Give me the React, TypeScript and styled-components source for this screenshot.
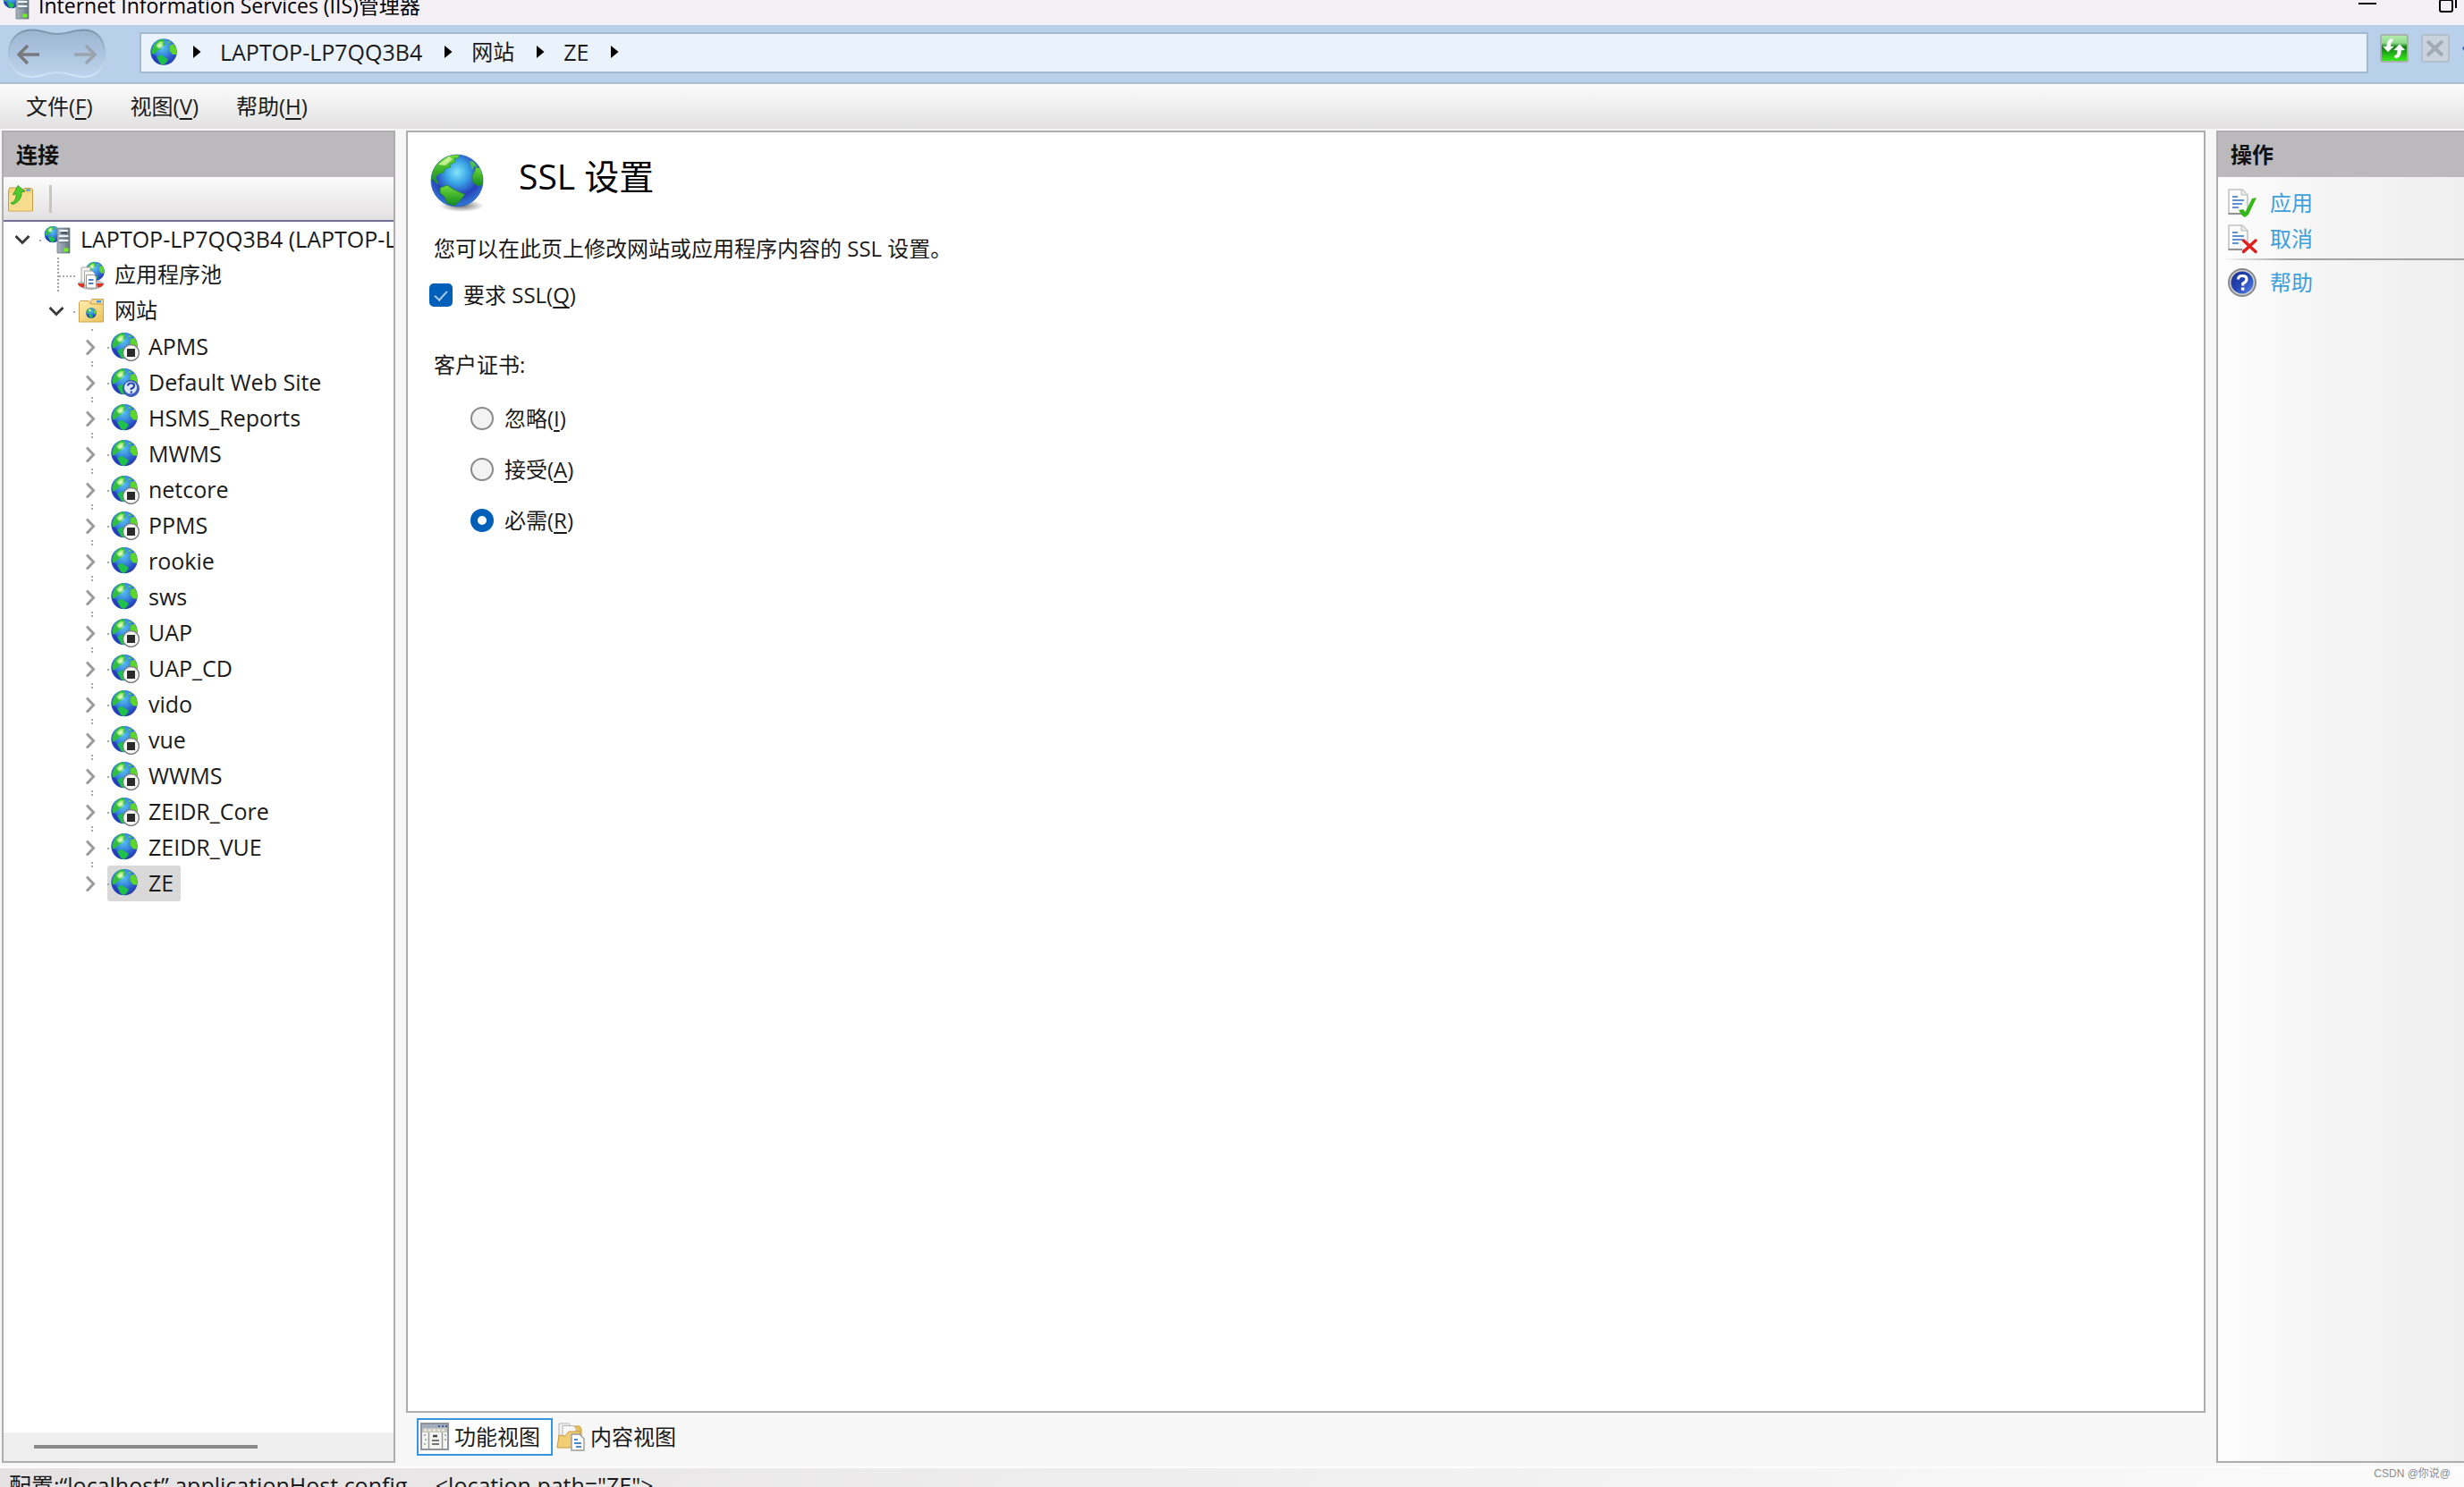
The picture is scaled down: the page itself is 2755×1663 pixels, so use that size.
import React, { useId, useState } from "react";
import styled, { createGlobalStyle, css } from "styled-components";

const GlobalStyle = createGlobalStyle`
  * { box-sizing: border-box; }
  html, body { margin: 0; padding: 0; overflow: hidden; }
  body, button, input {
    font-family: "Open Sans", "Noto Sans CJK SC", sans-serif;
    font-size: 24px;
    line-height: 32px;
    color: #1a1a1a;
  }
  button { border: 0; padding: 0; background: none; }
  svg { display: block; flex: none; }
`;

const line = "#adadad";

/* ---------- drawings ---------- */

function GlobeArt({ r = 15, cx = 15, cy = 15 }: { r?: number; cx?: number; cy?: number }) {
  const id = useId();
  const s = r / 15;
  return (
    <g transform={`translate(${cx - r} ${cy - r}) scale(${s})`}>
      <defs>
        <radialGradient id={id + "o"} cx="0.45" cy="0.32" r="0.72">
          <stop offset="0" stopColor="#5cc4f2" />
          <stop offset="0.4" stopColor="#3b8fe0" />
          <stop offset="0.75" stopColor="#2b4fc8" />
          <stop offset="1" stopColor="#2a3c9c" />
        </radialGradient>
        <radialGradient id={id + "h"} cx="0.5" cy="0.5" r="0.5">
          <stop offset="0" stopColor="#ffffff" stopOpacity="0.95" />
          <stop offset="1" stopColor="#d8ffb0" stopOpacity="0" />
        </radialGradient>
        <clipPath id={id + "c"}><circle cx="15" cy="15" r="14.5" /></clipPath>
      </defs>
      <circle cx="15" cy="15" r="14.7" fill={`url(#${id}o)`} />
      <g clipPath={`url(#${id}c)`}>
        <path d="M2 18 C1 12 4 5 11 1 L16 1 L15 4 L17 7 L13 9 L12 12 L9 13 L6 16 Z" fill="#30bf3c" />
        <path d="M6 8 L11 3 L15 4 L13 8 L9 11 Z" fill="#8fe25a" />
        <path d="M7 21 L12 18 L16 21 L20 23 L18 27 L14 30 L10 27 Z" fill="#1fc04c" />
        <path d="M22 8 L26 6 L30 12 L29 18 L25 18 L22 14 Z" fill="#5fd62b" />
        <path d="M20 3 L23 4 L22 6 L19 5 Z" fill="#4cc85a" />
        <path d="M1 17 C3 24 7 28 12 30 L9 24 L6 19 Z" fill="#2338b8" opacity="0.75" />
      </g>
      <circle cx="11" cy="8" r="4.5" fill={`url(#${id}h)`} />
    </g>
  );
}

type Badge = "none" | "stop" | "unknown";

function SiteIcon({ badge }: { badge: Badge }) {
  return (
    <svg width="32" height="32" viewBox="0 0 32 32" aria-hidden="true">
      <GlobeArt cx={15} cy={14.5} />
      {badge === "stop" && (
        <g>
          <circle cx="22.5" cy="22.5" r="9" fill="#f6f6f6" stroke="#808080" strokeWidth="1.4" />
          <rect x="18" y="18" width="9" height="9" fill="#2b2b2b" />
        </g>
      )}
      {badge === "unknown" && (
        <g>
          <circle cx="22.5" cy="22.5" r="9" fill="#3f62c4" stroke="#3453a8" strokeWidth="1" />
          <circle cx="22" cy="21.5" r="7" fill="#dfe8fb" />
          <path d="M19 19.5 Q19 16.5 22.5 16.5 Q26 16.5 26 19.5 Q26 21.500 22.7 22.800 V24" fill="none" stroke="#2747ad" strokeWidth="2.2" />
          <rect x="21.6" y="25.4" width="2.4" height="2.2" fill="#2747ad" />
        </g>
      )}
    </svg>
  );
}

function ServerIcon() {
  const id = useId();
  return (
    <svg width="32" height="32" viewBox="0 0 32 32" aria-hidden="true">
      <defs>
        <linearGradient id={id} x1="0" x2="1">
          <stop offset="0" stopColor="#a9b6bf" /><stop offset="0.5" stopColor="#8c9aa4" /><stop offset="1" stopColor="#63717c" />
        </linearGradient>
      </defs>
      <GlobeArt r={9.5} cx={11} cy={10} />
      <path d="M16 4 L18 3 H30 V31 H16 Z" fill={`url(#${id})`} stroke="#61707a" strokeWidth="0.7" />
      <path d="M18.5 6 H28 M18 12 H28.5 M18 17 H28.5" stroke="#eef3f5" strokeWidth="2" />
      <path d="M20 8.5 H27" stroke="#2c3a44" strokeWidth="1.4" />
      <path d="M18 14.3 H28.5 M18 19.3 H28.5" stroke="#6b7882" strokeWidth="1" />
      <rect x="23.5" y="25.5" width="5" height="4" fill="#6ff51a" />
    </svg>
  );
}

function PoolIcon() {
  return (
    <svg width="32" height="32" viewBox="0 0 32 32" aria-hidden="true">
      <GlobeArt r={11} cx={20} cy={11.5} />
      <path d="M1 25 Q3 31 16 31.5 Q28 31 30 25 L24 22 H6 Z" fill="#c6cacb" stroke="#9b9fa0" strokeWidth="0.8" />
      <path d="M1 25 Q2 29 8 29.5 L9 25 Z" fill="#e2321f" /><path d="M30 25 Q29 29 23 29.5 L22 25 Z" fill="#e2321f" />
      <path d="M5 7 H15 V24 H5 Z" fill="#f4f4f2" stroke="#a8a8a4" />
      <path d="M8.5 11 H17 L20 14 V27 H8.5 Z" fill="#f7f7f5" stroke="#a8a8a4" />
      <path d="M10.5 15.5 H19 L21.5 18 V30 H10.5 Z" fill="#fff" stroke="#9c9c98" />
      <path d="M13 21 H18.5 M13 25 H18.5" stroke="#4d83c9" strokeWidth="2" />
    </svg>
  );
}

function SitesFolderIcon() {
  const id = useId();
  return (
    <svg width="32" height="32" viewBox="0 0 32 32" aria-hidden="true">
      <defs>
        <linearGradient id={id} x2="1" y2="1"><stop offset="0" stopColor="#fdeeb0" /><stop offset="1" stopColor="#edc35b" /></linearGradient>
      </defs>
      <path d="M15 5 L17 2.5 H29.5 V9 H15 Z" fill="#f4d98a" stroke="#c9a049" />
      <rect x="22" y="4" width="5" height="2.4" fill="#3f93e6" />
      <path d="M2.5 6.5 L4 4.5 H13 L15.5 8 H29.5 V28 H2.5 Z" fill={`url(#${id})`} stroke="#cfa24a" />
      <GlobeArt r={6} cx={16} cy={18} />
    </svg>
  );
}

function UpFolderIcon() {
  return (
    <svg width="30" height="32" viewBox="0 0 30 32" aria-hidden="true">
      <path d="M1.5 7 L3 4 H10 L12 7 H18 L19 4.5 H27 L28.5 6 V30 H1.5 Z" fill="#f3d37c" stroke="#c69d45" />
      <path d="M2 10 H28 V29.5 H2 Z" fill="#f7dc8d" />
      <rect x="21" y="5.5" width="5" height="2.2" fill="#4d9be8" />
      <path d="M4 21 C9 20 10.500 15 10 10.500 L6.500 12 L12 1.500 L20 8 L16 8.500 C16.500 15 12.500 21 6 22.500 Z" fill="#4fcb2e" stroke="#2e9a1c" strokeWidth="0.9" />
    </svg>
  );
}

function NavBackdrop() {
  const id = useId();
  return (
    <svg width="112" height="58" viewBox="0 0 112 58" aria-hidden="true">
      <defs>
        <linearGradient id={id} x2="0" y2="1">
          <stop offset="0" stopColor="#9cb4d0" /><stop offset="0.5" stopColor="#acc4df" /><stop offset="1" stopColor="#bfd5ee" />
        </linearGradient>
        <linearGradient id={id + "s"} x2="0" y2="1">
          <stop offset="0" stopColor="#7c93af" /><stop offset="0.4" stopColor="#a3bad5" /><stop offset="1" stopColor="#d3e5f7" />
        </linearGradient>
      </defs>
      <path d="M28 2.5 C40 2.5 44 7 56 7 C68 7 74 2.5 86 2.5 C101 2.5 109 14 109 29 C109 44 101 55 86 55 C74 55 68 50 56 50 C44 50 40 55 28 55 C11 55 2 44 2 29 C2 14 11 2.5 28 2.5 Z"
        fill={`url(#${id})`} stroke={`url(#${id}s)`} strokeWidth="2" />
    </svg>
  );
}

function ArrowIcon({ flip, color }: { flip?: boolean; color: string }) {
  return (
    <svg width="26" height="24" viewBox="0 0 26 24" aria-hidden="true">
      <path d={flip ? "M1 12 H23 M14 2 L24 12 L14 22" : "M25 12 H3 M12 2 L2 12 L12 22"} fill="none" stroke={color} strokeWidth="3.4" />
    </svg>
  );
}

function CrumbArrow() {
  return <svg width="9" height="16" viewBox="0 0 9 16" aria-hidden="true"><path d="M0 1 L8.5 8 L0 15 Z" fill="#000" /></svg>;
}

function RefreshIcon() {
  const id = useId();
  return (
    <svg width="32" height="32" viewBox="0 0 32 32" aria-hidden="true">
      <defs>
        <linearGradient id={id} x2="0" y2="1">
          <stop offset="0" stopColor="#b4ecb0" /><stop offset="0.3" stopColor="#8fdc8c" /><stop offset="0.45" stopColor="#0f7d13" /><stop offset="1" stopColor="#3df21f" />
        </linearGradient>
      </defs>
      <rect x="1" y="1" width="30" height="30" rx="2" fill={`url(#${id})`} stroke="#a7b3ac" strokeWidth="2" />
      <path d="M14 5 C10 5 8 8 7.500 14 H3.500 L9 20 L15.500 14 H12 C12 10 13 8 15 7.500 Z" fill="#fff" stroke="#c3d4c3" strokeWidth="0.5" />
      <path d="M17 27 C22 27 23.500 24 24 18 H28 L22 11.500 L15.500 18 H19.500 C19.500 22 19 24 16 24.500 Z" fill="#fff" stroke="#c3d4c3" strokeWidth="0.5" />
    </svg>
  );
}

function StopIcon() {
  return (
    <svg width="32" height="32" viewBox="0 0 32 32" aria-hidden="true">
      <rect x="1" y="1" width="30" height="30" rx="2" fill="#c9d3de" stroke="#b3bfcc" strokeWidth="2" />
      <path d="M7 8 L24 24 M24 8 L7 24" stroke="#a2abb5" strokeWidth="4" />
    </svg>
  );
}

function HomeEdgeIcon() {
  return <svg width="3" height="14" viewBox="0 0 3 14" aria-hidden="true"><path d="M3 3 L0 7 L3 11 Z" fill="#3b62c8" /></svg>;
}

function BigGlobe() {
  const id = useId();
  return (
    <svg width="64" height="68" viewBox="0 0 64 68" aria-hidden="true">
      <defs>
        <radialGradient id={id} cx="0.5" cy="0.5" r="0.5"><stop offset="0" stopColor="#333" stopOpacity="0.7" /><stop offset="1" stopColor="#333" stopOpacity="0" /></radialGradient>
        <radialGradient id={id + "o"} cx="0.5" cy="0.34" r="0.72">
          <stop offset="0" stopColor="#86e4fb" /><stop offset="0.3" stopColor="#3aa5e6" /><stop offset="0.62" stopColor="#2640b8" /><stop offset="0.85" stopColor="#3070d2" /><stop offset="1" stopColor="#2f7ccc" />
        </radialGradient>
        <linearGradient id={id + "g"} x2="0" y2="1"><stop offset="0" stopColor="#6fdc3a" /><stop offset="1" stopColor="#138a22" /></linearGradient>
        <clipPath id={id + "c"}><circle cx="31" cy="32" r="29" /></clipPath>
      </defs>
      <ellipse cx="36" cy="60" rx="25" ry="7" fill={`url(#${id})`} />
      <circle cx="31" cy="32" r="29" fill={`url(#${id}o)`} stroke="#2a5fae" strokeWidth="0.8" />
      <g clipPath={`url(#${id}c)`}>
        <path d="M1 34 C0 20 10 6 24 3 L34 3 L32 7 L28 7 L29 11 L23 14 L24 17 L17 19 L16 23 L11 24 L7 28 L10 36 L7 34 L4 29 Z" fill={`url(#${id}g)`} stroke="#2a9a34" strokeWidth="0.8" />
        <path d="M10 14 L22 5 L26 8 L18 15 Z" fill="#d7f7a4" opacity="0.85" />
        <path d="M12 40 L20 37 L26 41 L36 46 L40 47 L35 54 L28 60 L20 57 L17 50 L12 46 Z" fill={`url(#${id}g)`} stroke="#1c7a2c" strokeWidth="0.8" />
        <path d="M52 17 L57 18 L60 26 L60 36 L55 38 L49 34 L48 27 L51 21 Z" fill={`url(#${id}g)`} stroke="#2a8a34" strokeWidth="0.8" />
        <path d="M45 10 L50 11 L54 17 L50 16 L48 20 Z" fill="#4cbf53" />
      </g>
    </svg>
  );
}

function DocIcon({ kind }: { kind: "apply" | "cancel" }) {
  return (
    <svg width="34" height="34" viewBox="0 0 34 34" aria-hidden="true">
      <path d="M2 2 H17 L23 8 V29 H2 Z" fill="#fbfbfb" stroke="#c2c2c2" strokeWidth="1.6" />
      <path d="M16 2 V8 H23" fill="#e8e8e8" stroke="#b9b9b9" />
      <path d="M1.500 29 H17" stroke="#949494" strokeWidth="2.200" />
      <path d="M6 10 H12 M6 14 H19 M6 18 H17 M6 22 H13" stroke="#6192cb" strokeWidth="1.800" />
      {kind === "apply"
        ? <path d="M13 25 L18 24 L20.500 27 L28 12 L33 11 L24 30 L20 33 L17 31 Z" fill="#33b81a" />
        : <path d="M18.500 19 L32 31.500 M32 19 L18.500 31.500" stroke="#e01f1f" strokeWidth="3.500" strokeLinecap="round" />}
    </svg>
  );
}

function HelpIcon() {
  const id = useId();
  return (
    <svg width="34" height="34" viewBox="0 0 34 34" aria-hidden="true">
      <defs><linearGradient id={id} x1="0" y1="0" x2="1" y2="1"><stop offset="0" stopColor="#1b3191" /><stop offset="0.5" stopColor="#2445b5" /><stop offset="1" stopColor="#5b8af0" /></linearGradient></defs>
      <circle cx="17" cy="17" r="15" fill="#d0d0d0" stroke="#8a8a8a" strokeWidth="2" />
      <circle cx="17" cy="17" r="12.500" fill={`url(#${id})`} />
      <path d="M12.500 13.500 Q12.500 9.500 17.200 9.500 Q22 9.500 22 13.300 Q22 16 17.800 18.200 V20.500" fill="none" stroke="#fff" strokeWidth="3.200" />
      <rect x="16" y="22.500" width="3.400" height="3.200" fill="#fff" />
    </svg>
  );
}

function FeaturesIcon() {
  return (
    <svg width="32" height="32" viewBox="0 0 32 32" aria-hidden="true">
      <rect x="1" y="1" width="30" height="29" fill="#f4f4f0" stroke="#8f949c" strokeWidth="2" />
      <rect x="2" y="2" width="28" height="4" fill="#a4adbd" /><path d="M20 4 H22 M24 4 H26 M28 4 H30" stroke="#3d5a92" strokeWidth="2" />
      <rect x="2" y="6" width="28" height="5" fill="#c6c6bd" /><path d="M4 8.500 H28" stroke="#eeeeea" strokeWidth="2" strokeDasharray="3 2" />
      <path d="M9.500 11 V29 M24.500 11 V29" stroke="#9a9d9f" strokeWidth="1.500" />
      <path d="M14 15 H19" stroke="#444" strokeWidth="2.500" /><path d="M13 20 H21 M13 24 H21" stroke="#777" strokeWidth="1.800" />
      <path d="M4 14 H6 M5 19 H7 M4 24 H6 M27 14 H29 M27 19 H29" stroke="#8f9db2" strokeWidth="1.500" />
    </svg>
  );
}

function ContentIcon() {
  return (
    <svg width="32" height="32" viewBox="0 0 32 32" aria-hidden="true">
      <path d="M12 4 H26 L28 7 V22 H8 Z" fill="#e9bf5a" stroke="#c79a3c" />
      <path d="M3 1 H14 L17 4 V22 H3 Z" fill="#f2f2f2" stroke="#b3b3b3" /><path d="M7 3.500 H19 L22 6.500 V22 H7 Z" fill="#f8f8f8" stroke="#b3b3b3" />
      <path d="M1 28 L3 14 L10 15 L14 10 H27 L24 28 Z" fill="#f2cf74" stroke="#c79a3c" />
      <path d="M17 13 H26 L31 18 V31 H17 Z" fill="#fff" stroke="#9a9a9a" strokeWidth="1.400" />
      <path d="M20 19 H24 M20 23 H28 M22 27 H28" stroke="#4a86d0" strokeWidth="2" />
    </svg>
  );
}

/* ---------- frame ---------- */

const Window = styled.div`
  position: relative;
  height: 100vh;
  display: flex;
  flex-direction: column;
  overflow: hidden;
  background: #f7f7f7;
`;

const TitleBar = styled.header`
  flex: none;
  display: flex;
  align-items: center;
  height: 44px;
  margin-top: -16px;
  padding: 0 8px 0 2px;
  gap: 9px;
  background: #f5eff6;
`;
const TitleText = styled.h1`
  flex: 1;
  margin: 0;
  font-size: 23px;
  font-weight: 400;
  color: #000;
`;
const WindowButtons = styled.div`
  display: flex;
  align-items: center;
  gap: 70px;
`;

const NavBar = styled.nav`
  flex: none;
  display: flex;
  align-items: center;
  height: 66px;
  padding-left: 8px;
  background: #b9d0ea;
  border-bottom: 2px solid #a9bfd6;
`;
const History = styled.div`
  position: relative;
  width: 112px;
  height: 58px;
  margin-right: 36px;
`;
const HistoryButtons = styled.div`
  position: absolute;
  inset: 0;
  display: flex;
  align-items: center;
  justify-content: space-between;
  padding: 2px 12px 0 11px;
`;
const Crumbs = styled.div`
  flex: 1;
  display: flex;
  align-items: center;
  height: 46px;
  margin-bottom: 2px;
  padding: 0 0 2px 10px;
  border: 2px solid #a3b9d0;
  background: #eaf2fb;
`;
const Crumb = styled.button<{ $latin?: boolean }>`
  padding: 0 25px 0 21px;
  font-size: ${(p) => (p.$latin ? 25 : 24)}px;
  &:first-of-type { padding: 0 18px 0 0; }
`;
const NavTools = styled.div`
  display: flex;
  align-items: center;
  gap: 14px;
  margin: 0 -1px 12px 13px;
`;

const MenuBar = styled.div`
  flex: none;
  display: flex;
  align-items: center;
  height: 50px;
  padding-left: 8px;
  background: linear-gradient(#fcfcfc, #e3e1e2);
`;
const MenuButton = styled.button`
  padding: 0 21px;
  u { text-underline-offset: 4px; }
`;

const Body = styled.div`
  flex: 1;
  min-height: 0;
  display: grid;
  grid-template-columns: 440px minmax(0, 1fr) 277px;
  column-gap: 12px;
  padding: 2px 0 4px 2px;
`;
const Panel = styled.aside<{ $open?: boolean }>`
  display: flex;
  flex-direction: column;
  min-width: 0;
  border: 2px solid ${line};
  background: ${(p) => (p.$open ? "linear-gradient(90deg, #fdfdfd, #f5f5f5 40%, #efefef)" : "#fff")};
  ${(p) => p.$open && css`border-right: 0;`}
`;
const PanelTitle = styled.h2`
  margin: 0;
  height: 50px;
  padding: 8px 14px;
  font-size: 24px;
  line-height: 34px;
  font-weight: 700;
  color: #111;
  background: #bcb9bc;
`;
const PanelTools = styled.div`
  display: flex;
  align-items: center;
  gap: 17px;
  height: 50px;
  padding-left: 4px;
  background: linear-gradient(#fcfcfc, #e3e1e2);
  border-bottom: 2px solid #706f94;
`;
const Divider = styled.span`
  width: 3px;
  height: 31px;
  background: #c9c7b8;
`;

/* ---------- tree ---------- */

const Tree = styled.ul`
  flex: 1;
  min-height: 0;
  margin: 0;
  padding: 0 0 0 2px;
  overflow: hidden;
  list-style: none;
`;
const Row = styled.li<{ $level: number }>`
  display: flex;
  height: 40px;
  padding-left: ${(p) => p.$level * 38}px;
`;

type Guide = "root" | "leaf" | "group" | "site" | "last";
const dot = "#a6a6a6";
const guides: Record<Guide, string> = {
  root: "none",
  group: "none",
  leaf: `repeating-linear-gradient(${dot} 0 2px, transparent 2px 4px) 20px 0 / 2px 100% no-repeat,
    repeating-linear-gradient(90deg, ${dot} 0 2px, transparent 2px 4px) 22px 20px / 16px 2px no-repeat`,
  site: `linear-gradient(${dot}, ${dot}) 20px 0 / 2px 2px no-repeat,
    linear-gradient(${dot}, ${dot}) 20px 36px / 2px 2px no-repeat`,
  last: `linear-gradient(${dot}, ${dot}) 20px 0 / 2px 2px no-repeat`,
};
const Branch = styled.span<{ $guide: Guide }>`
  flex: none;
  display: flex;
  align-items: center;
  justify-content: center;
  width: 38px;
  background: ${(p) => guides[p.$guide]};
`;
const Toggle = styled.button`
  display: flex;
  padding: 0 0 0 2px;
`;
const Node = styled.button<{ $latin?: boolean; $selected?: boolean }>`
  display: flex;
  align-items: center;
  gap: 10px;
  padding: 0 8px 0 4px;
  border-radius: 3px;
  font-size: ${(p) => (p.$latin ? 25 : 24)}px;
  white-space: nowrap;
  background: linear-gradient(${dot}, ${dot}) 0 20px / 2px 2px no-repeat ${(p) => (p.$selected ? "#d9d9d9" : "transparent")};
`;
const NodeLabel = styled.span`
  padding-bottom: 2px;
`;

const ScrollTrack = styled.div`
  height: 32px;
  padding: 14px 34px;
  background: #efefef;
`;
const ScrollThumb = styled.div`
  width: 250px;
  height: 4px;
  background: #8a8a8a;
`;

/* ---------- centre ---------- */

const Centre = styled.main`
  display: flex;
  flex-direction: column;
  min-width: 0;
`;
const Page = styled.section`
  flex: 1;
  padding: 22px 24px;
  border: 2px solid ${line};
  background: #fff;
`;
const PageHead = styled.div`
  display: flex;
  align-items: center;
  gap: 36px;
  height: 68px;
`;
const PageTitle = styled.h2`
  margin: 0 0 14px;
  font-size: 39px;
  line-height: 48px;
  font-weight: 400;
  color: #000;
`;
const Text = styled.p`
  margin: 0;
  padding: 24px 5px 20px;
`;
const Fields = styled.fieldset`
  margin: 0;
  padding: 0 46px;
  border: 0;
  display: flex;
  flex-direction: column;
  gap: 25px;
  legend { margin-left: -41px; padding: 46px 0 28px; }
`;
const Choice = styled.label`
  display: flex;
  align-items: center;
  gap: 12px;
  u { text-underline-offset: 4px; }
`;
const Check = styled.input`
  appearance: none;
  display: grid;
  place-items: center;
  width: 26px;
  height: 26px;
  margin: 0;
  border: 2px solid #8a8a8a;
  border-radius: 5px;
  background: #f3f3f3;
  &:checked { border-color: #005fb8; background: #005fb8; }
  &:checked::after {
    content: "";
    width: 6px;
    height: 12px;
    margin-bottom: 3px;
    border: solid #a9cbe9;
    border-width: 0 2px 2px 0;
    transform: rotate(42deg);
  }
`;
const Radio = styled.input`
  appearance: none;
  width: 26px;
  height: 26px;
  margin: 0;
  border: 2px solid #8a8a8a;
  border-radius: 50%;
  background: #f3f3f3;
  &:checked { border: 8px solid #005fb8; background: #fff; }
`;
const Tabs = styled.div`
  display: flex;
  padding: 6px 12px 8px;
`;
const Tab = styled.button<{ $active?: boolean }>`
  display: flex;
  align-items: center;
  gap: 6px;
  height: 42px;
  padding: 0 12px 0 2px;
  border: 2px solid ${(p) => (p.$active ? "#3695e0" : "transparent")};
  background: ${(p) => (p.$active ? "#fff" : "transparent")};
`;

/* ---------- actions ---------- */

const ActionList = styled.div`
  display: flex;
  flex-direction: column;
  padding-top: 9px;
`;
const Action = styled.a`
  display: flex;
  align-items: center;
  gap: 14px;
  height: 40px;
  padding-left: 10px;
  color: #3f9fdc;
  text-decoration: none;
`;
const Rule = styled.hr`
  width: 100%;
  height: 2px;
  margin: 2px 0 5px;
  border: 0;
  background: linear-gradient(90deg, transparent 4px, #a3a3a3 80px);
`;

const StatusBar = styled.footer`
  flex: none;
  height: 48px;
  margin-bottom: -25px;
  padding: 3px 10px;
  font-size: 25px;
  white-space: pre;
  background: linear-gradient(90deg, #e4e2e3, #fbfbfb);
  border-top: 2px solid #fdfdfd;
`;
const Watermark = styled.span`
  position: absolute;
  right: 15px;
  bottom: 7px;
  font-family: "Liberation Sans", "Noto Sans CJK SC", sans-serif;
  font-size: 12px;
  line-height: 16px;
  color: #8c8c8c;
`;

/* ---------- data ---------- */

const sites: { name: string; badge: Badge }[] = [
  { name: "APMS", badge: "stop" },
  { name: "Default Web Site", badge: "unknown" },
  { name: "HSMS_Reports", badge: "none" },
  { name: "MWMS", badge: "none" },
  { name: "netcore", badge: "stop" },
  { name: "PPMS", badge: "stop" },
  { name: "rookie", badge: "none" },
  { name: "sws", badge: "none" },
  { name: "UAP", badge: "stop" },
  { name: "UAP_CD", badge: "stop" },
  { name: "vido", badge: "none" },
  { name: "vue", badge: "stop" },
  { name: "WWMS", badge: "stop" },
  { name: "ZEIDR_Core", badge: "stop" },
  { name: "ZEIDR_VUE", badge: "none" },
  { name: "ZE", badge: "none" },
];

const certModes = [
  { id: "ignore", text: "忽略", key: "I" },
  { id: "accept", text: "接受", key: "A" },
  { id: "require", text: "必需", key: "R" },
];

const menus = [["文件", "F"], ["视图", "V"], ["帮助", "H"]];

function Chevron({ open }: { open?: boolean }) {
  return (
    <svg width="18" height="20" viewBox="0 0 18 20" aria-hidden="true">
      {open
        ? <path d="M0.500 6 L8 13.500 L15.500 6" fill="none" stroke="#3a3a3a" strokeWidth="3" />
        : <path d="M4 2.500 L11.500 10.500 L4 18.500" fill="none" stroke="#9b9b9b" strokeWidth="3" />}
    </svg>
  );
}

interface TreeItemProps {
  level: number;
  guide: Guide;
  icon: React.ReactNode;
  label: string;
  open?: boolean;
  latin?: boolean;
  selected?: boolean;
  onSelect?: () => void;
}

function TreeItem({ level, guide, icon, label, open, latin, selected, onSelect }: TreeItemProps) {
  return (
    <Row $level={level}>
      <Branch $guide={guide}>
        {guide !== "leaf" && (
          <Toggle aria-label={open ? "折叠" : "展开"} aria-expanded={!!open}><Chevron open={open} /></Toggle>
        )}
      </Branch>
      <Node $latin={latin} $selected={selected} onClick={onSelect}>{icon}<NodeLabel>{label}</NodeLabel></Node>
    </Row>
  );
}

export default function App() {
  const [site, setSite] = useState("ZE");
  const [ssl, setSsl] = useState(true);
  const [cert, setCert] = useState("require");

  return (
    <Window>
      <GlobalStyle />
      <TitleBar>
        <ServerIcon />
        <TitleText>Internet Information Services (IIS)管理器</TitleText>
        <WindowButtons>
          <button aria-label="最小化">
            <svg width="20" height="20" viewBox="0 0 20 20"><path d="M0 8 H20" stroke="#000" strokeWidth="2" /></svg>
          </button>
          <button aria-label="还原">
            <svg width="20" height="20" viewBox="0 0 20 20">
              <rect x="1" y="4" width="14" height="13" rx="2" fill="none" stroke="#000" strokeWidth="2" />
              <path d="M5 1 H16 Q19 1 19 4 V13" fill="none" stroke="#000" strokeWidth="2" />
            </svg>
          </button>
        </WindowButtons>
      </TitleBar>

      <NavBar>
        <History>
          <NavBackdrop />
          <HistoryButtons>
            <button aria-label="后退"><ArrowIcon color="#77797c" /></button>
            <button aria-label="前进"><ArrowIcon flip color="#9ba3ac" /></button>
          </HistoryButtons>
        </History>
        <Crumbs>
          <Crumb aria-label="根"><svg width="30" height="30" viewBox="0 0 30 30"><GlobeArt /></svg></Crumb>
          <CrumbArrow />
          <Crumb $latin>LAPTOP-LP7QQ3B4</Crumb>
          <CrumbArrow />
          <Crumb>网站</Crumb>
          <CrumbArrow />
          <Crumb $latin>ZE</Crumb>
          <CrumbArrow />
        </Crumbs>
        <NavTools>
          <button aria-label="刷新"><RefreshIcon /></button>
          <button aria-label="停止"><StopIcon /></button>
          <HomeEdgeIcon />
        </NavTools>
      </NavBar>

      <MenuBar>
        {menus.map(([text, key]) => (
          <MenuButton key={key}>{text}(<u>{key}</u>)</MenuButton>
        ))}
      </MenuBar>

      <Body>
        <Panel>
          <PanelTitle>连接</PanelTitle>
          <PanelTools>
            <button aria-label="向上"><UpFolderIcon /></button>
            <Divider />
          </PanelTools>
          <Tree>
            <TreeItem level={0} guide="root" open latin icon={<ServerIcon />} label="LAPTOP-LP7QQ3B4 (LAPTOP-LP7QQ3B4" />
            <TreeItem level={1} guide="leaf" icon={<PoolIcon />} label="应用程序池" />
            <TreeItem level={1} guide="group" open icon={<SitesFolderIcon />} label="网站" />
            {sites.map((s, i) => (
              <TreeItem
                key={s.name}
                level={2}
                guide={i === sites.length - 1 ? "last" : "site"}
                latin
                icon={<SiteIcon badge={s.badge} />}
                label={s.name}
                selected={site === s.name}
                onSelect={() => setSite(s.name)}
              />
            ))}
          </Tree>
          <ScrollTrack><ScrollThumb /></ScrollTrack>
        </Panel>

        <Centre>
          <Page>
            <PageHead>
              <BigGlobe />
              <PageTitle>SSL 设置</PageTitle>
            </PageHead>
            <Text>您可以在此页上修改网站或应用程序内容的 SSL 设置。</Text>
            <Choice>
              <Check type="checkbox" checked={ssl} onChange={(e) => setSsl(e.target.checked)} />
              <span>要求 SSL(<u>Q</u>)</span>
            </Choice>
            <Fields>
              <legend>客户证书:</legend>
              {certModes.map((m) => (
                <Choice key={m.id}>
                  <Radio type="radio" name="cert" checked={cert === m.id} onChange={() => setCert(m.id)} />
                  <span>{m.text}(<u>{m.key}</u>)</span>
                </Choice>
              ))}
            </Fields>
          </Page>
          <Tabs>
            <Tab $active><FeaturesIcon />功能视图</Tab>
            <Tab><ContentIcon />内容视图</Tab>
          </Tabs>
        </Centre>

        <Panel $open>
          <PanelTitle>操作</PanelTitle>
          <ActionList>
            <Action href="#apply"><DocIcon kind="apply" />应用</Action>
            <Action href="#cancel"><DocIcon kind="cancel" />取消</Action>
            <Rule />
            <Action href="#help"><HelpIcon />帮助</Action>
          </ActionList>
        </Panel>
      </Body>

      <StatusBar>配置:“localhost” applicationHost.config ，&lt;location path="ZE"&gt;</StatusBar>
      <Watermark>CSDN @你说@</Watermark>
    </Window>
  );
}
